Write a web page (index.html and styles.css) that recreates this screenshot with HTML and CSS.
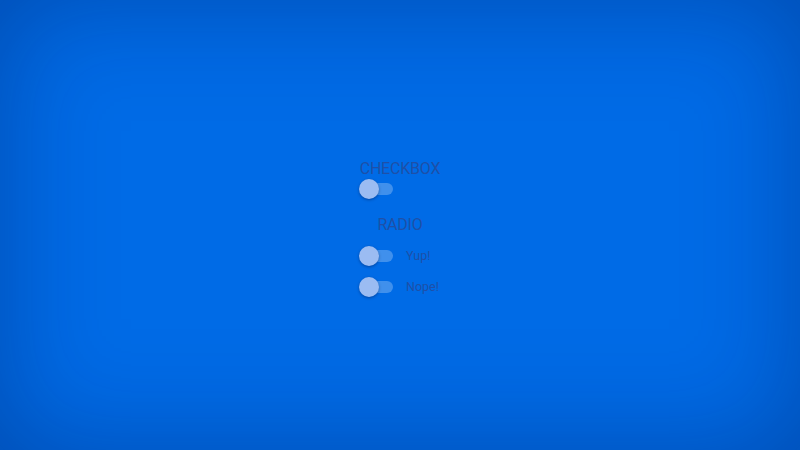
FILE: index.html
```html
<!DOCTYPE html>
<html>
<head>
<meta charset="utf-8">
<link rel="stylesheet" href="styles.css">
</head>
<body>
<div class="panel">
  <div class="title">CHECKBOX</div>
  <label class="row">
    <span class="toggle"><span class="track"></span><span class="knob"></span></span>
  </label>
  <div class="title title-radio">RADIO</div>
  <label class="row row-first">
    <span class="toggle"><span class="track"></span><span class="knob"></span></span>
    <span class="label">Yup!</span>
  </label>
  <label class="row row-next">
    <span class="toggle"><span class="track"></span><span class="knob"></span></span>
    <span class="label">Nope!</span>
  </label>
</div>
</body>
</html>
```
FILE: styles.css
```css
html, body {
  margin: 0;
  height: 100%;
}
body {
  background: #006be6;
  box-shadow: inset 0 0 110px rgba(0, 20, 80, 0.35);
  display: flex;
  align-items: center;
  justify-content: center;
  font-family: Roboto, "Liberation Sans", sans-serif;
  color: #1e50a8;
}
.panel {
  width: 82px;
  padding-top: 7px;
  display: flex;
  flex-direction: column;
}
.title {
  font-size: 16px;
  line-height: 18px;
  height: 18px;
  text-align: center;
  letter-spacing: -0.2px;
}
.title-radio {
  margin-top: 17px;
}
.row {
  display: flex;
  align-items: center;
  height: 20px;
  margin-top: 1px;
}
.row-first { margin-top: 12px; }
.row-next { margin-top: 11px; }
.toggle {
  position: relative;
  width: 34px;
  height: 20px;
  flex: none;
}
.track {
  position: absolute;
  left: 4px;
  top: 4px;
  width: 30px;
  height: 12px;
  border-radius: 6px;
  background: rgba(255, 255, 255, 0.25);
}
.knob {
  position: absolute;
  left: 0;
  top: 0;
  width: 20px;
  height: 20px;
  border-radius: 50%;
  background: #9bbcf2;
  box-shadow: 0 1px 3px rgba(0, 0, 40, 0.35);
}
.label {
  margin-left: 13px;
  font-size: 12.5px;
  line-height: 14px;
}
```
